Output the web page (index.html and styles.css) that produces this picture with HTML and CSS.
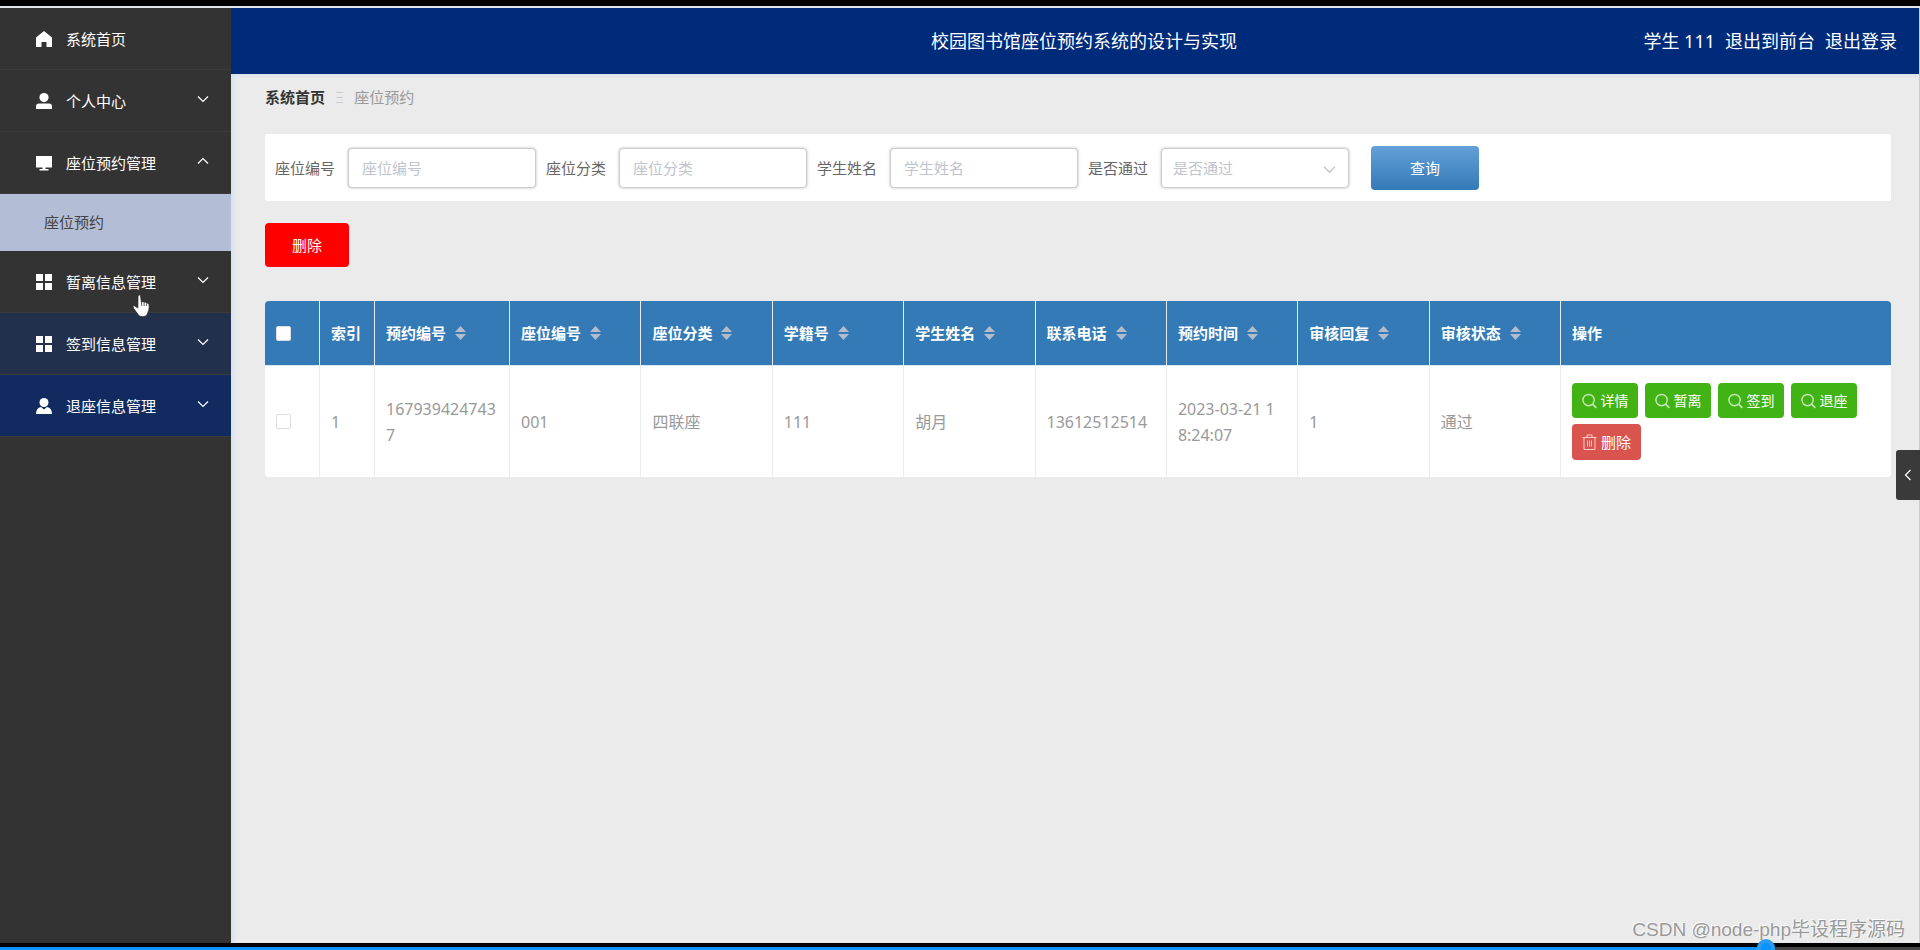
FILE: index.html
```html
<!DOCTYPE html>
<html lang="zh-CN">
<head>
  <meta charset="UTF-8">
  <meta name="viewport" content="width=device-width, initial-scale=1.0">
  <title>校园图书馆座位预约系统的设计与实现</title>
  <link rel="stylesheet" href="styles.css">
</head>
<body>
  <svg class="sprite" aria-hidden="true">
    <symbol id="i-down" viewBox="0 0 12 12"><path d="M1 3.5l5 5 5-5" fill="none" stroke="currentColor" stroke-width="1.2"/></symbol>
    <symbol id="i-grid" viewBox="0 0 16 16"><path d="M0 0h7v7H0zM9 0h7v7H9zM0 9h7v7H0zM9 9h7v7H9z" fill="currentColor"/></symbol>
    <symbol id="i-search" viewBox="0 0 16 16"><circle cx="7" cy="7" r="6" fill="none" stroke="currentColor" stroke-width="1.5"/><path d="M11.3 11.3l4 4" stroke="currentColor" stroke-width="1.8"/></symbol>
    <symbol id="i-sort" viewBox="0 0 11 14"><path d="M5.500 0L11 6H0zM5.500 14L0 8h11z" fill="currentColor"/></symbol>
  </svg>

  <div class="top-strip"></div>

  <div class="app">
    <nav class="sidebar">
      <a href="#" class="menu-item">
        <svg class="menu-icon" viewBox="0 0 16 16"><path d="M8 0L0 6.5V16h5.5v-5h5v5H16V6.5z" fill="currentColor"/></svg>
        <span>系统首页</span>
      </a>
      <a href="#" class="menu-item">
        <svg class="menu-icon" viewBox="0 0 16 16"><circle cx="8" cy="4.6" r="4.6" fill="currentColor"/><path d="M0 16v-2.5q0-3 3-3h10q3 0 3 3V16z" fill="currentColor"/></svg>
        <span>个人中心</span>
        <svg class="menu-arrow"><use href="#i-down"/></svg>
      </a>
      <a href="#" class="menu-item">
        <svg class="menu-icon" viewBox="0 0 16 16"><path d="M0 1h16v11.5H0zM6.5 12.500h3v1.500h-3zM3.500 14h9v1.500h-9z" fill="currentColor"/></svg>
        <span>座位预约管理</span>
        <svg class="menu-arrow open"><use href="#i-down"/></svg>
      </a>
      <a href="#" class="sub-item">座位预约</a>
      <a href="#" class="menu-item">
        <svg class="menu-icon"><use href="#i-grid"/></svg>
        <span>暂离信息管理</span>
        <svg class="menu-arrow"><use href="#i-down"/></svg>
      </a>
      <a href="#" class="menu-item leaving">
        <svg class="menu-icon"><use href="#i-grid"/></svg>
        <span>签到信息管理</span>
        <svg class="menu-arrow"><use href="#i-down"/></svg>
      </a>
      <a href="#" class="menu-item hovered">
        <svg class="menu-icon" viewBox="0 0 16 16"><circle cx="8" cy="4.500" r="4.500" fill="currentColor"/><path d="M0 16q0-6 5-7l3 2.500L11 9q5 1 5 7z" fill="currentColor"/></svg>
        <span>退座信息管理</span>
        <svg class="menu-arrow"><use href="#i-down"/></svg>
      </a>
      <svg class="pointer" viewBox="0 0 18 24"><path d="M6 1.500q2-1.500 2.600.5l.8 6 1.600-.5 1 .8 1.600-.3 1 1 1.600.3q1.200.5 1 4 0 3-1.400 5.500-.8 4-4.800 4-4 .3-5.500-3L2 15q-1.800-2.500-.5-3.200 1.200-.5 2.800 1.200l1.500 1z" fill="#fff" stroke="#222" stroke-width=".8"/><path d="M9.400 8l.4 4M12 8.500l.2 3.500M14.600 9.300V12" stroke="#333" stroke-width=".8"/></svg>
    </nav>

    <div class="page">
      <header class="header">
        <span></span>
        <h1>校园图书馆座位预约系统的设计与实现</h1>
        <div class="user">
          <span>学生 111</span>
          <a href="#">退出到前台</a>
          <a href="#">退出登录</a>
        </div>
      </header>

      <main class="main">
        <div class="breadcrumb">
          <a href="#">系统首页</a>
          <span class="separator">Ξ</span>
          <span>座位预约</span>
        </div>

        <form class="filters">
          <label for="seatNo">座位编号</label>
          <input type="text" id="seatNo" placeholder="座位编号">
          <label for="seatType">座位分类</label>
          <input type="text" id="seatType" placeholder="座位分类">
          <label for="student">学生姓名</label>
          <input type="text" id="student" placeholder="学生姓名">
          <label for="passed">是否通过</label>
          <div class="select-wrap">
            <select id="passed">
              <option value="">是否通过</option>
              <option>通过</option>
              <option>未通过</option>
            </select>
            <svg class="select-arrow"><use href="#i-down"/></svg>
          </div>
          <button type="button" class="btn-query">查询</button>
        </form>

        <button type="button" class="btn-remove">删除</button>

        <table class="table">
          <colgroup>
            <col class="col-small">
            <col class="col-small">
            <col class="col-no">
            <col class="col-data" span="8">
            <col>
          </colgroup>
          <thead>
            <tr>
              <th><input type="checkbox" aria-label="全选"></th>
              <th>索引</th>
              <th>预约编号<svg class="sort"><use href="#i-sort"/></svg></th>
              <th>座位编号<svg class="sort"><use href="#i-sort"/></svg></th>
              <th>座位分类<svg class="sort"><use href="#i-sort"/></svg></th>
              <th>学籍号<svg class="sort"><use href="#i-sort"/></svg></th>
              <th>学生姓名<svg class="sort"><use href="#i-sort"/></svg></th>
              <th>联系电话<svg class="sort"><use href="#i-sort"/></svg></th>
              <th>预约时间<svg class="sort"><use href="#i-sort"/></svg></th>
              <th>审核回复<svg class="sort"><use href="#i-sort"/></svg></th>
              <th>审核状态<svg class="sort"><use href="#i-sort"/></svg></th>
              <th>操作</th>
            </tr>
          </thead>
          <tbody>
            <tr>
              <td><input type="checkbox" aria-label="选择"></td>
              <td>1</td>
              <td>1679394247437</td>
              <td>001</td>
              <td>四联座</td>
              <td>111</td>
              <td>胡月</td>
              <td>13612512514</td>
              <td class="time">2023-03-21 18:24:07</td>
              <td>1</td>
              <td>通过</td>
              <td>
                <div class="actions">
                  <button type="button" class="btn-green"><svg><use href="#i-search"/></svg>详情</button>
                  <button type="button" class="btn-green"><svg><use href="#i-search"/></svg>暂离</button>
                  <button type="button" class="btn-green"><svg><use href="#i-search"/></svg>签到</button>
                  <button type="button" class="btn-green"><svg><use href="#i-search"/></svg>退座</button>
                  <button type="button" class="btn-red"><svg viewBox="0 0 14 16"><path d="M0 3.500h14M4.500 3V1h5v2M1.500 4v11.500h11V4M5 6.500v6M9 6.500v6M7 6.500v6" fill="none" stroke="currentColor"/></svg>删除</button>
                </div>
              </td>
            </tr>
          </tbody>
        </table>
      </main>
    </div>

    <button type="button" class="drawer-tab" aria-label="展开"><svg><use href="#i-down"/></svg></button>
    <div class="watermark">CSDN @node-php毕设程序源码</div>
  </div>

  <div class="player">
    <div class="played"><span class="knob"></span></div>
  </div>
</body>
</html>
```

FILE: styles.css
```css
* {
  box-sizing: border-box;
}

body {
  margin: 0;
  height: 100vh;
  display: flex;
  flex-direction: column;
  overflow: hidden;
  background: #ebebeb;
  color: #666;
  font-family: "Noto Sans", "Noto Sans CJK SC", sans-serif;
  font-size: 16px;
  line-height: 26px;
}

a {
  color: inherit;
  text-decoration: none;
}

button, input, select {
  font: inherit;
}

button {
  border: none;
  cursor: pointer;
  color: #fff;
}

.sprite {
  display: none;
}

.top-strip {
  flex: none;
  height: 8px;
  background: #000;
  border-bottom: 2px solid #e4e8ee;
}

.app {
  flex: 1;
  min-height: 0;
  display: flex;
  position: relative;
  border-right: 1px solid #ccc;
}

/* sidebar */
.sidebar {
  flex: none;
  width: 231px;
  position: relative;
  background: #333;
  color: #fff;
}

.menu-item {
  display: flex;
  align-items: center;
  gap: 14px;
  height: 62px;
  padding: 0 22px 0 36px;
  border-bottom: 1px solid #3b3b3b;
  font-size: 15px;
}

.menu-icon {
  width: 16px;
  height: 16px;
}

.menu-arrow {
  width: 12px;
  height: 12px;
  margin-left: auto;
  margin-bottom: 4px;
}

.menu-arrow.open {
  transform: rotate(180deg);
}

.menu-item.leaving {
  background: #22304c;
}

.menu-item.hovered {
  background: #112b60;
}

.sub-item {
  display: block;
  padding: 15px 44px 16px;
  background: #b3bed6;
  color: #444;
  font-size: 15px;
}

.pointer {
  position: absolute;
  left: 132px;
  top: 286px;
  width: 18px;
  height: 24px;
}

/* header */
.page {
  flex: 1;
  min-width: 0;
  display: flex;
  flex-direction: column;
}

.header {
  display: grid;
  grid-template-columns: 1fr auto 1fr;
  align-items: center;
  height: 66px;
  padding: 0 22px 0 40px;
  background: #002a7a;
  color: #fff;
  font-size: 18px;
}

.header h1 {
  margin: 0;
  font-size: 18px;
  font-weight: 400;
}

.user {
  display: flex;
  justify-content: flex-end;
  gap: 10px;
}

/* content */
.main {
  flex: 1;
  padding: 10px 28px 0 34px;
  box-shadow: inset 3px 2px 4px #d6e2ef;
}

.breadcrumb {
  display: flex;
  gap: 10px;
  padding-bottom: 12px;
  margin-bottom: 12px;
  color: #999;
  font-size: 15px;
}

.breadcrumb a {
  color: #333;
  font-weight: 600;
}

.separator {
  color: #c5c8cf;
  font-weight: 300;
}

.filters {
  display: flex;
  align-items: center;
  gap: 10px;
  height: 67px;
  padding: 0 10px;
  border-radius: 3px;
  background: #fff;
}

.filters label {
  width: 63px;
  font-size: 15px;
}

.filters input, .filters select {
  width: 188px;
  height: 40px;
  padding: 0 13px;
  border: 1px solid #ccc;
  border-radius: 4px;
  background: #fff;
  box-shadow: 0 0 3px #bbb;
  font-size: 15px;
}

.filters select {
  appearance: none;
  display: block;
  padding: 0 11px;
  color: #c0c4cc;
}

.filters input::placeholder {
  color: #c0c4cc;
}

.select-wrap {
  position: relative;
}

.select-arrow {
  position: absolute;
  right: 13px;
  top: 15px;
  width: 13px;
  height: 13px;
  color: #c0c4cc;
  pointer-events: none;
}

.btn-query {
  width: 108px;
  height: 44px;
  margin-left: 12px;
  border-radius: 4px;
  background: linear-gradient(#64a0d8, #337ab7);
  font-size: 15px;
}

.btn-remove {
  display: block;
  width: 84px;
  height: 44px;
  margin: 22px 0 34px;
  border-radius: 4px;
  background: #f00;
  font-size: 15px;
}

/* table */
.table {
  width: 100%;
  table-layout: fixed;
  border-collapse: separate;
  border-spacing: 0;
  border-radius: 4px;
  overflow: hidden;
  background: #fff;
  color: #999;
}

.col-small { width: 55px; }
.col-no { width: 135px; }
.col-data { width: 8.08%; }

.table th, .table td {
  padding: 0 12px 0 11px;
  border-right: 1px solid #ebebeb;
  text-align: left;
  word-break: break-all;
}

.table th {
  height: 65px;
  background: #337ab7;
  border-bottom: 1px solid #dce9f2;
  color: #fff;
  font-size: 15px;
  font-weight: 700;
  white-space: nowrap;
}

.table td {
  height: 111px;
}

.table td.time {
  padding-right: 16px;
}

.table th:last-child, .table td:last-child {
  border-right: none;
}

.table input {
  appearance: none;
  display: block;
  width: 15px;
  height: 15px;
  margin: 0;
  border: 1px solid #ddd;
  border-radius: 2px;
  background: #fff;
}

.sort {
  width: 11px;
  height: 14px;
  margin-left: 9px;
  vertical-align: -1px;
  color: #b4bccb;
}

.actions {
  display: flex;
  flex-wrap: wrap;
  gap: 6px 7px;
}

.actions button {
  display: flex;
  align-items: center;
  justify-content: center;
  gap: 4px;
  width: 66px;
  height: 35px;
  padding: 0;
  border-radius: 4px;
  font-size: 14px;
}

.actions svg {
  width: 15px;
  height: 16px;
  opacity: 0.7;
}

.actions .btn-green {
  background: #41b314;
}

.actions .btn-red {
  width: 69px;
  height: 36px;
  background: #d9534f;
  font-size: 15px;
}

/* overlays */
.drawer-tab {
  position: absolute;
  right: -1px;
  top: 442px;
  width: 24px;
  height: 50px;
  padding: 0;
  border-radius: 3px 0 0 3px;
  background: #3a3a3a;
}

.drawer-tab svg {
  width: 12px;
  height: 12px;
  transform: rotate(90deg);
}

.watermark {
  position: absolute;
  right: 14px;
  bottom: 0;
  color: #999;
  font-family: "Liberation Sans", "Noto Sans CJK SC", sans-serif;
  font-size: 19px;
  text-shadow: -1px -1px 0 #fff;
}

.player {
  flex: none;
  height: 7px;
  border-top: 4px solid #000;
  background: #444;
}

.played {
  position: relative;
  width: 92%;
  height: 3px;
  background: #0a93fb;
}

.knob {
  position: absolute;
  right: -9px;
  top: -8px;
  width: 18px;
  height: 18px;
  border: 4px solid rgba(64, 160, 240, 0.6);
  border-radius: 50%;
  background: #0a93fb;
}
```
